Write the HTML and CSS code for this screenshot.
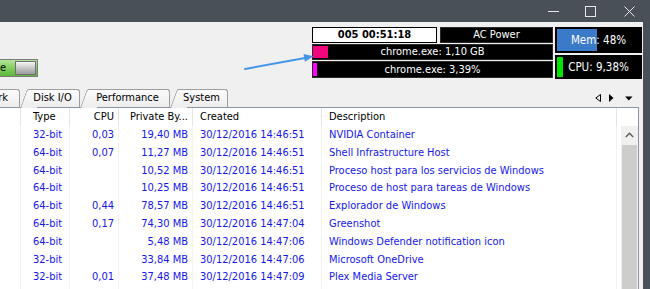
FILE: index.html
```html
<!DOCTYPE html>
<html>
<head>
<meta charset="utf-8">
<link rel="stylesheet" href="styles.css">
</head>
<body>
<div class="titlebar">
  <svg class="tb-btn tb-min" width="11" height="11" viewBox="0 0 11 11"><path d="M0 5.5H11"/></svg>
  <svg class="tb-btn tb-max" width="11" height="11" viewBox="0 0 11 11"><rect x="0.5" y="0.5" width="10" height="10"/></svg>
  <svg class="tb-btn tb-close" width="11" height="11" viewBox="0 0 11 11"><path d="M0.5 0.5L10.5 10.5M10.5 0.5L0.5 10.5"/></svg>
</div>
<div class="window">
  <div class="toolbar">
    <div class="toggle"><span class="toggle-label">Pause</span><span class="knob"></span></div>
    <div class="status">
      <div class="status-left">
        <div class="sbox uptime">005 00:51:18</div>
        <div class="sbox">AC Power</div>
        <div class="sbox wide"><span class="sbar pink" style="width:15px"></span><span class="stext">chrome.exe: 1,10 GB</span></div>
        <div class="sbox wide"><span class="sbar magenta" style="width:4px"></span><span class="stext">chrome.exe: 3,39%</span></div>
      </div>
      <div class="status-right">
        <div class="meter mem"><span class="mfill blue" style="width:46%"></span><span class="mtext">Mem: 48%</span></div>
        <div class="meter cpu"><span class="mfill green" style="width:7%"></span><span class="mtext">CPU: 9,38%</span></div>
      </div>
    </div>
  </div>
  <div class="tabstrip">
    <div class="tab tab-net"><span>Network</span></div>
    <div class="tab tab-disk"><span>Disk I/O</span></div>
    <div class="tab tab-perf"><span>Performance</span></div>
    <div class="tab tab-sys"><span>System</span></div>
    <svg class="tab-nav" width="38" height="8" viewBox="0 0 38 8">
      <path class="nav-outline" d="M5.5 0.5L0.8 4L5.5 7.5Z"/>
      <path class="nav-fill" d="M14 0L18.5 4L14 8Z"/>
      <path class="nav-fill" d="M30 2.5H37.5L33.75 6.5Z"/>
    </svg>
  </div>
  <div class="list">
    <div class="hdr">
      <div class="c0"></div>
      <div class="c1">Type</div>
      <div class="c2 num">CPU</div>
      <div class="c3 num">Private By...</div>
      <div class="c4">Created</div>
      <div class="c5">Description</div>
      <div class="c6"></div>
    </div>
    <div class="body">
      <div class="rows">
        <div class="row"><div></div><div class="c1">32-bit</div><div class="num">0,03</div><div class="num">19,40 MB</div><div class="c4">30/12/2016 14:46:51</div><div class="c5">NVIDIA Container</div></div>
        <div class="row"><div></div><div class="c1">64-bit</div><div class="num">0,07</div><div class="num">11,27 MB</div><div class="c4">30/12/2016 14:46:51</div><div class="c5">Shell Infrastructure Host</div></div>
        <div class="row"><div></div><div class="c1">64-bit</div><div class="num"></div><div class="num">10,52 MB</div><div class="c4">30/12/2016 14:46:51</div><div class="c5">Proceso host para los servicios de Windows</div></div>
        <div class="row"><div></div><div class="c1">64-bit</div><div class="num"></div><div class="num">10,25 MB</div><div class="c4">30/12/2016 14:46:51</div><div class="c5">Proceso de host para tareas de Windows</div></div>
        <div class="row"><div></div><div class="c1">64-bit</div><div class="num">0,44</div><div class="num">78,57 MB</div><div class="c4">30/12/2016 14:46:51</div><div class="c5">Explorador de Windows</div></div>
        <div class="row"><div></div><div class="c1">64-bit</div><div class="num">0,17</div><div class="num">74,30 MB</div><div class="c4">30/12/2016 14:47:04</div><div class="c5">Greenshot</div></div>
        <div class="row"><div></div><div class="c1">64-bit</div><div class="num"></div><div class="num">5,48 MB</div><div class="c4">30/12/2016 14:47:06</div><div class="c5">Windows Defender notification icon</div></div>
        <div class="row"><div></div><div class="c1">32-bit</div><div class="num"></div><div class="num">33,84 MB</div><div class="c4">30/12/2016 14:47:06</div><div class="c5">Microsoft OneDrive</div></div>
        <div class="row"><div></div><div class="c1">32-bit</div><div class="num">0,01</div><div class="num">37,48 MB</div><div class="c4">30/12/2016 14:47:09</div><div class="c5">Plex Media Server</div></div>
        <div class="row"><div></div><div class="c1"></div><div class="num"></div><div class="num"></div><div class="c4"></div><div class="c5"></div></div>
      </div>
      <div class="scroll">
        <div class="sc-up"><svg width="9" height="6" viewBox="0 0 9 6"><path d="M0.8 5L4.5 1.3L8.2 5"/></svg></div>
        <div class="sc-thumb"></div>
      </div>
    </div>
  </div>
</div>
<svg class="annotation" width="650" height="289" viewBox="0 0 650 289">
  <path class="ann-line" d="M245 69L305 58"/>
  <path class="ann-head" d="M313.5 56.2L303.5 54L304.9 61.8Z"/>
</svg>
</body>
</html>
```

FILE: styles.css
```css
* { box-sizing: border-box; }
html, body { margin: 0; padding: 0; }
body {
  width: 650px;
  height: 289px;
  overflow: hidden;
  position: relative;
  background: #4a5058;
  font-family: "DejaVu Sans Condensed", "DejaVu Sans", sans-serif;
  font-size: 11px;
  color: #000;
}

/* title bar */
.titlebar {
  height: 22px;
  display: flex;
  align-items: center;
  justify-content: flex-end;
  padding-right: 15px;
}
.tb-btn { display: block; fill: none; stroke: #e8e8e8; stroke-width: 1; }
.tb-max { margin-left: 26px; }
.tb-close { margin-left: 28px; }

/* window body */
.window {
  width: 643px;
  height: 267px;
  background: #f0f0f0;
  display: flex;
  flex-direction: column;
}

.toolbar {
  height: 67px;
  display: flex;
  flex-shrink: 0;
}

.toggle {
  margin-top: 37px;
  margin-left: -25px;
  width: 63px;
  height: 18px;
  border: 1px solid #7b7b7b;
  background: linear-gradient(#b4e69a, #7fcc5a 55%, #5cb83a);
  display: flex;
  align-items: center;
  justify-content: space-between;
  padding: 0 1px 0 1px;
}
.toggle-label { line-height: 14px; }
.knob {
  width: 21px;
  height: 14px;
  border: 1px solid #6f6f6f;
  background: linear-gradient(#f6f6f6, #c8c8c8 50%, #9d9d9d);
}

.status {
  margin-left: auto;
  margin-right: 1px;
  margin-top: 5px;
  display: flex;
  gap: 2px;
  align-items: flex-start;
}
.status-left {
  width: 241px;
  display: grid;
  grid-template-columns: 125px 113px;
  grid-template-rows: 16px 16px 17px;
  column-gap: 3px;
  row-gap: 1px;
}
.sbox {
  background: #000;
  color: #fff;
  border: 1px solid #2a2a2a;
  display: flex;
  align-items: center;
  justify-content: center;
  line-height: 14px;
}
.sbox.uptime {
  background: #fff;
  color: #000;
  border-color: #000;
  font-weight: bold;
}
.sbox.wide {
  grid-column: 1 / 3;
  position: relative;
}
.sbar {
  position: absolute;
  left: 0;
  top: 1px;
  bottom: 1px;
}
.sbar.pink { background: #f20680; }
.sbar.magenta { background: #ff00ff; }
.stext { position: relative; }

.status-right {
  width: 87px;
  display: flex;
  flex-direction: column;
  gap: 2px;
}
.meter {
  position: relative;
  background: #000;
  color: #fff;
  display: flex;
  align-items: center;
  justify-content: center;
  font-size: 11.5px;
}
.meter.mem { height: 26px; }
.meter.cpu { height: 24px; }
.mfill {
  position: absolute;
  left: 2px;
  top: 2px;
  bottom: 2px;
}
.mfill.blue { background: #3b79c9; }
.mfill.green { background: #00e400; }
.mtext { position: relative; }

/* tabs */
.tabstrip {
  height: 18px;
  display: flex;
  align-items: stretch;
  flex-shrink: 0;
}
.tab {
  position: relative;
  height: 18px;
  line-height: 18px;
  text-align: center;
  padding-left: 5px;
  flex-shrink: 0;
}
.tab::before {
  content: "";
  position: absolute;
  left: 0;
  top: 0;
  width: 16px;
  height: 18px;
  border-left: 1px solid #9d9d9d;
  border-top: 1px solid #9d9d9d;
  border-top-left-radius: 3px;
  background: linear-gradient(#fbfbfb, #ededed);
  transform: skewX(-20deg);
  transform-origin: 0 100%;
}
.tab::after {
  content: "";
  position: absolute;
  left: 8px;
  right: 0;
  top: 0;
  bottom: 0;
  border-top: 1px solid #9d9d9d;
  border-right: 1px solid #9d9d9d;
  border-top-right-radius: 3px;
  background: linear-gradient(#fbfbfb, #ededed);
}
.tab span { position: relative; z-index: 1; }
.tab-net { width: 64px; margin-left: -44px; text-align: right; padding-right: 12px; }
.tab-disk { width: 60px; }
.tab-perf { width: 90px; }
.tab-sys { width: 58px; }
.tab-nav {
  margin-left: auto;
  margin-right: 10px;
  align-self: center;
  margin-top: -1px;
}
.nav-outline { fill: none; stroke: #000; stroke-width: 1; }
.nav-fill { fill: #000; }

/* list */
.list {
  width: 639px;
  flex: 1;
  background: #fff;
  border-top: 1px solid #8d96a3;
  border-right: 1px solid #8d96a3;
  display: flex;
  flex-direction: column;
  overflow: hidden;
}
.hdr, .row {
  display: grid;
  grid-template-columns: 21px 49px 49px 74px 129px 295px 4px;
}
.hdr { height: 18px; line-height: 18px; flex-shrink: 0; }
.hdr > div { border-right: 1px solid #e5e5e5; white-space: nowrap; }
.hdr > .c6 { border-right: none; }
.c1 { padding-left: 12px; }
.num { text-align: right; padding-right: 4px; }
.c4 { padding-left: 7px; }
.c5 { padding-left: 7px; }
.body { flex: 1; display: flex; }
.rows { width: 621px; }
.row {
  height: 17.8px;
  line-height: 17.8px;
  color: #1616ec;
  white-space: nowrap;
}
.row > div { border-right: 1px solid #f3f3f3; }
.scroll {
  width: 17px;
  background: #f0f0f0;
  display: flex;
  flex-direction: column;
}
.sc-up {
  height: 17px;
  display: flex;
  align-items: center;
  justify-content: center;
}
.sc-up svg { fill: none; stroke: #5a5a5a; stroke-width: 1.4; }
.sc-thumb {
  flex: 1;
  margin: 2px 1px 0 1px;
  background: #cdcdcd;
}

/* annotation arrow */
.annotation {
  position: absolute;
  left: 0;
  top: 0;
  pointer-events: none;
}
.ann-line { stroke: #4596e6; stroke-width: 2; stroke-linecap: round; fill: none; }
.ann-head { fill: #4596e6; }
```
